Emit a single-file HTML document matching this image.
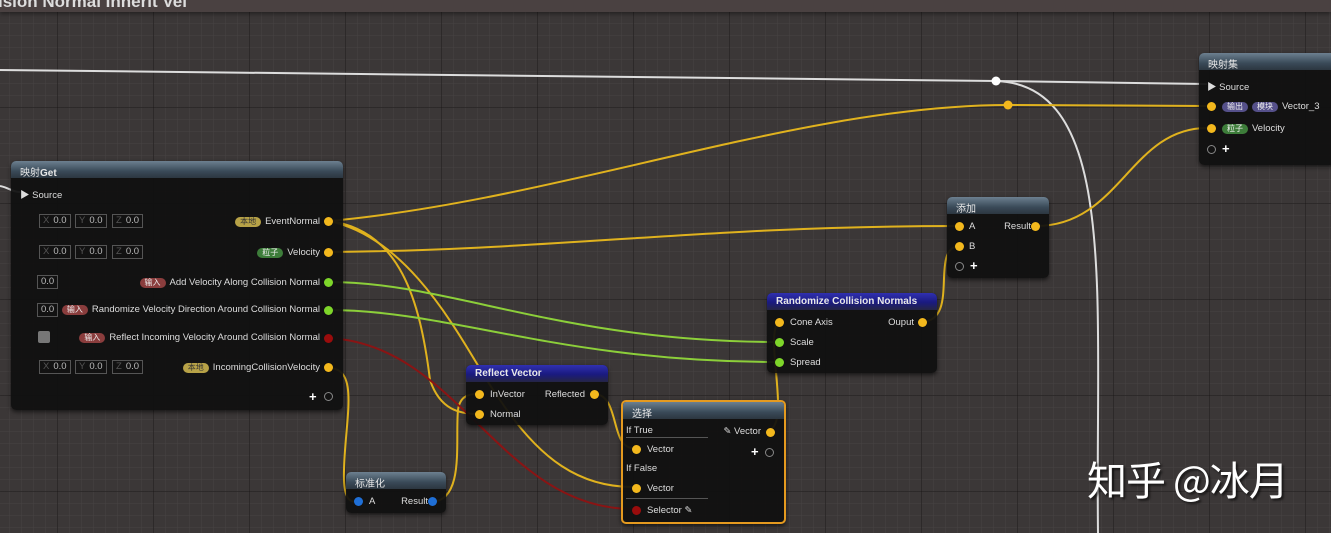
<!DOCTYPE html>
<html><head><meta charset="utf-8"><style>
*{margin:0;padding:0;box-sizing:border-box}
body{width:1331px;height:533px;overflow:hidden;background:#3b3737;font-family:"Liberation Sans","Noto Sans CJK SC",sans-serif;color:#ddd;position:relative}
.grid{position:absolute;inset:0;background-image:
linear-gradient(to right,rgba(25,22,22,.5) 1px,transparent 1px),
linear-gradient(to bottom,rgba(25,22,22,.5) 1px,transparent 1px),
linear-gradient(to right,rgba(72,68,68,.5) 1px,transparent 1px),
linear-gradient(to bottom,rgba(72,68,68,.5) 1px,transparent 1px);
background-size:96px 96px,96px 96px,12px 12px,12px 12px;background-position:57px 11px,57px 11px,9px 11px,9px 11px}
.top{position:absolute;left:0;top:0;width:1331px;height:12px;background:#4a4141;box-shadow:0 2px 4px rgba(0,0,0,.4)}
.top span{position:absolute;left:-2px;top:-8px;font-size:17px;font-weight:bold;color:#ddd}
.node{position:absolute;background:rgba(16,16,16,.94);border-radius:5px;box-shadow:0 2px 4px rgba(0,0,0,.6);font-size:9.5px;color:#ddd}
.hd{height:17px;border-radius:5px 5px 0 0;background:linear-gradient(#6d8090,#3a4a58 60%,#2c3640);padding:3px 0 0 9px;font-size:10px;color:#e8e8e8}
.hb{background:linear-gradient(#3030b0,#1a1a80 55%,#252545);font-weight:bold}
.a{position:absolute;white-space:nowrap}
.p{position:absolute;width:9px;height:9px;border-radius:50%;background:#f3b81d}
.g{background:#7ed62a}.r{background:#9a0c0c}.b{background:#1f6fd6}
.tag{display:inline-block;border-radius:6px;padding:0 5px;font-size:8px;line-height:10px;margin-right:4px;color:#eee}
.ty{background:#b7a247;color:#333}.tg{background:#3d7d3a}.tr{background:#8a3d3d}.tp{background:#55508a}
.box{position:absolute;border:1px solid #555;height:14px;font-size:9.5px;color:#bbb;padding:0 3px;line-height:12px}
.box i{color:#555;font-style:normal;margin-right:4px}
.plus{position:absolute;color:#fff;font-weight:bold;font-size:13px;line-height:10px}
.ring{position:absolute;width:9px;height:9px;border:1.5px solid #888;border-radius:50%}
</style></head><body>
<div class="grid"></div>
<div class="top"><span>ision Normal Inherit Vel</span></div>

<svg width="1331" height="533" style="position:absolute;left:0;top:0">
<g fill="none" stroke-width="2">
<path d="M0,70 L996,81 L1207,84" stroke="#ddd"/>
<path d="M996,81 C1120,85 1095,300 1098,533" stroke="#ddd"/>
<path d="M0,186 C10,188 12,192 20,192" stroke="#ddd"/>
<path d="M329,221 C560,200 800,105 1008,105 L1207,106" stroke="#e0b21e"/>
<path d="M329,252 C560,250 700,226 958,226" stroke="#e0b21e"/>
<path d="M329,221 C400,230 420,300 430,380 C440,410 460,414 478,414" stroke="#e0b21e"/>
<path d="M329,221 C420,240 470,360 500,400 C540,460 580,487 633,487" stroke="#e0b21e"/>
<path d="M329,368 C360,368 345,420 344,470 C343,500 350,502 357,502" stroke="#e0b21e"/>
<path d="M432,502 C465,500 455,440 458,410 C460,395 470,394 478,394" stroke="#e0b21e"/>
<path d="M594,394 C620,394 610,448 633,448" stroke="#e0b21e"/>
<path d="M770,430 C790,420 765,340 778,322" stroke="#e0b21e"/>
<path d="M922,322 C960,320 930,250 958,246" stroke="#e0b21e"/>
<path d="M1036,226 C1120,226 1130,128 1207,128" stroke="#e0b21e"/>
<path d="M329,282 C450,282 560,342 778,342" stroke="#8ccf3a"/>
<path d="M329,310 C450,310 560,362 778,362" stroke="#8ccf3a"/>
<path d="M329,338 C460,345 500,509 633,509" stroke="#8a1414"/>
</g>
<circle cx="996" cy="81" r="4.5" fill="#fff"/>
<circle cx="1008" cy="105" r="4.5" fill="#f3b81d"/>
</svg>

<div class="node" style="left:11px;top:161px;width:332px;height:249px">
<div class="hd">映射<b>Get</b></div>
<div class="a" style="left:9px;top:26px">▶ Source</div>
<div class="box" style="left:28px;top:53px"><i>X</i>0.0</div><div class="box" style="left:64px;top:53px"><i>Y</i>0.0</div><div class="box" style="left:101px;top:53px"><i>Z</i>0.0</div>
<div class="box" style="left:28px;top:84px"><i>X</i>0.0</div><div class="box" style="left:64px;top:84px"><i>Y</i>0.0</div><div class="box" style="left:101px;top:84px"><i>Z</i>0.0</div>
<div class="box" style="left:26px;top:114px">0.0</div>
<div class="box" style="left:26px;top:142px">0.0</div>
<div class="a" style="left:27px;top:170px;width:12px;height:12px;background:#777;border-radius:2px"></div>
<div class="box" style="left:28px;top:199px"><i>X</i>0.0</div><div class="box" style="left:64px;top:199px"><i>Y</i>0.0</div><div class="box" style="left:101px;top:199px"><i>Z</i>0.0</div>
<div class="a" style="right:23px;top:55px"><span class="tag ty">本地</span>EventNormal</div>
<div class="a" style="right:23px;top:86px"><span class="tag tg">粒子</span>Velocity</div>
<div class="a" style="right:23px;top:116px"><span class="tag tr">输入</span>Add Velocity Along Collision Normal</div>
<div class="a" style="right:23px;top:143px"><span class="tag tr">输入</span>Randomize Velocity Direction Around Collision Normal</div>
<div class="a" style="right:23px;top:171px"><span class="tag tr">输入</span>Reflect Incoming Velocity Around Collision Normal</div>
<div class="a" style="right:23px;top:201px"><span class="tag ty">本地</span>IncomingCollisionVelocity</div>
<div class="p" style="left:313px;top:56px"></div><div class="p" style="left:313px;top:87px"></div>
<div class="p g" style="left:313px;top:117px"></div><div class="p g" style="left:313px;top:145px"></div>
<div class="p r" style="left:313px;top:173px"></div><div class="p" style="left:313px;top:202px"></div>
<div class="plus" style="left:298px;top:231px">+</div><div class="ring" style="left:313px;top:231px"></div>
</div>

<div class="node" style="left:466px;top:365px;width:142px;height:60px">
<div class="hd hb">Reflect Vector</div>
<div class="p" style="left:9px;top:25px"></div><div class="a" style="left:24px;top:24px">InVector</div>
<div class="a" style="right:23px;top:24px">Reflected</div><div class="p" style="left:124px;top:25px"></div>
<div class="p" style="left:9px;top:45px"></div><div class="a" style="left:24px;top:44px">Normal</div>
</div>

<div class="node" style="left:621px;top:400px;width:165px;height:124px;border:2px solid #e59a1f">
<div class="hd" style="border-radius:3px 3px 0 0">选择</div>
<div class="a" style="left:3px;top:23px">If True</div>
<div style="position:absolute;left:3px;top:35px;width:82px;border-top:1px solid #555"></div>
<div class="a" style="right:23px;top:24px">✎ Vector</div><div class="p" style="left:143px;top:26px"></div>
<div class="p" style="left:9px;top:43px"></div><div class="a" style="left:24px;top:42px">Vector</div>
<div class="plus" style="left:128px;top:45px">+</div><div class="ring" style="left:142px;top:46px"></div>
<div class="a" style="left:3px;top:61px">If False</div>
<div class="p" style="left:9px;top:82px"></div><div class="a" style="left:24px;top:81px">Vector</div>
<div style="position:absolute;left:3px;top:96px;width:82px;border-top:1px solid #555"></div>
<div class="p r" style="left:9px;top:104px"></div><div class="a" style="left:24px;top:103px">Selector ✎</div>
</div>

<div class="node" style="left:767px;top:293px;width:170px;height:80px">
<div class="hd hb">Randomize Collision Normals</div>
<div class="p" style="left:8px;top:25px"></div><div class="a" style="left:23px;top:24px">Cone Axis</div>
<div class="a" style="right:23px;top:24px">Ouput</div><div class="p" style="left:151px;top:25px"></div>
<div class="p g" style="left:8px;top:45px"></div><div class="a" style="left:23px;top:44px">Scale</div>
<div class="p g" style="left:8px;top:65px"></div><div class="a" style="left:23px;top:64px">Spread</div>
</div>

<div class="node" style="left:947px;top:197px;width:102px;height:81px">
<div class="hd">添加</div>
<div class="p" style="left:8px;top:25px"></div><div class="a" style="left:22px;top:24px">A</div>
<div class="a" style="right:18px;top:24px">Result</div><div class="p" style="left:84px;top:25px"></div>
<div class="p" style="left:8px;top:45px"></div><div class="a" style="left:22px;top:44px">B</div>
<div class="ring" style="left:8px;top:65px"></div><div class="plus" style="left:23px;top:64px">+</div>
</div>

<div class="node" style="left:1199px;top:53px;width:140px;height:112px">
<div class="hd">映射集</div>
<div class="a" style="left:8px;top:26px">▶ Source</div>
<div class="p" style="left:8px;top:49px"></div><div class="a" style="left:23px;top:48px"><span class="tag tp">输出</span><span class="tag tp">模块</span>Vector_3</div>
<div class="p" style="left:8px;top:71px"></div><div class="a" style="left:23px;top:70px"><span class="tag tg">粒子</span>Velocity</div>
<div class="ring" style="left:8px;top:92px"></div><div class="plus" style="left:23px;top:91px">+</div>
</div>

<div class="node" style="left:346px;top:472px;width:100px;height:41px">
<div class="hd">标准化</div>
<div class="p b" style="left:8px;top:25px"></div><div class="a" style="left:23px;top:24px">A</div>
<div class="a" style="right:18px;top:24px">Result</div><div class="p b" style="left:82px;top:25px"></div>
</div>

<div class="a" style="left:1087px;top:449px;font-size:40px;color:#fff;font-family:'Noto Sans CJK SC','Liberation Sans',sans-serif;text-shadow:2px 2px 2px rgba(0,0,0,.6);letter-spacing:-1px">知乎 @冰月</div>
</body></html>
